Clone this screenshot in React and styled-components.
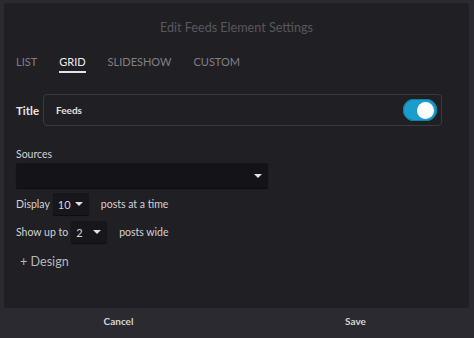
import React, { useState } from 'react'
import styled, { createGlobalStyle } from 'styled-components'

const Global = createGlobalStyle`
  html, body { margin: 0; padding: 0; background: #2b2a30; }
  body { font-family: Lato, "Open Sans", sans-serif; width: 474px; height: 338px; overflow: hidden; }
  * { box-sizing: border-box; }
`

const Frame = styled.div`
  width: 474px;
  height: 338px;
  display: flex;
  flex-direction: column;
  background: #2b2a30;
  padding-top: 3px;
`

const Panel = styled.div`
  flex: 1;
  margin: 0 5px 0 4px;
  background: #201f24;
  border-radius: 3px 3px 0 0;
  padding: 0 12px;
  display: flex;
  flex-direction: column;
`

const Heading = styled.h1`
  margin: 17px 0 0;
  text-align: center;
  font-size: 12.6px;
  font-weight: 400;
  color: #58575e;
`

const Tabs = styled.div`
  display: flex;
  gap: 22px;
  margin-top: 20px;
`

const Tab = styled.div`
  font-size: 11px;
  color: ${p => (p.$active ? '#ececee' : '#807f86')};
  padding-bottom: 3px;
  border-bottom: 2px solid ${p => (p.$active ? '#e4e4e6' : 'transparent')};
`

const TitleRow = styled.div`
  display: flex;
  align-items: center;
  gap: 4px;
  margin-top: 21px;
`

const Label = styled.span`
  font-size: 11.5px;
  font-weight: 700;
  color: #e6e6e8;
`

const TitleBox = styled.div`
  flex: 1;
  height: 32px;
  margin-right: 15px;
  border: 1px solid #3a3940;
  border-radius: 4px;
  display: flex;
  align-items: center;
  justify-content: space-between;
  padding: 0 4px 0 12px;
`

const TitleText = styled.span`
  font-size: 10px;
  font-weight: 700;
  color: #e0e0e2;
`

const Toggle = styled.div`
  width: 34px;
  height: 22px;
  border-radius: 11px;
  background: #1a9ccf;
  box-shadow: inset 0 0 0 1px #12839f;
  display: flex;
  align-items: center;
  justify-content: flex-end;
  padding-right: 3px;
`

const Knob = styled.div`
  width: 17px;
  height: 17px;
  border-radius: 50%;
  background: #ffffff;
`

const FieldLabel = styled.div`
  margin-top: 22px;
  font-size: 10.5px;
  color: #d2d2d4;
`

const Select = styled.div`
  background: ${p => (p.$deep ? '#141317' : '#17161a')};
  width: ${p => p.$w}px;
  height: ${p => p.$h}px;
  border-radius: 2px;
  box-shadow: 0 1px 1px rgba(0, 0, 0, 0.6);
  display: flex;
  align-items: center;
  justify-content: space-between;
  padding: 0 6px 0 ${p => (p.$deep ? 8 : 5)}px;
  color: #d6d6d8;
  font-size: 11px;
`

const Caret = styled.span`
  width: 0;
  height: 0;
  border-left: 4px solid transparent;
  border-right: 4px solid transparent;
  border-top: 4px solid #e2e2e4;
`

const Row = styled.div`
  display: flex;
  align-items: center;
  gap: 3px;
  margin-top: ${p => p.$mt}px;
  font-size: 10.5px;
  color: #d2d2d4;
`

const After = styled.span`
  margin-left: 9px;
`

const AddLink = styled.div`
  margin: 11px 0 0 4px;
  font-size: 12.6px;
  color: #b8b8bb;
`

const Footer = styled.div`
  height: 30px;
  display: flex;
  align-items: center;
  padding-bottom: 4px;
`

const FooterButton = styled.button`
  flex: 1;
  background: none;
  border: 0;
  font-family: inherit;
  font-size: 10px;
  font-weight: 700;
  color: #d4d4d6;
  cursor: pointer;
`

export default function App() {
  const [tab, setTab] = useState('GRID')
  const tabs = ['LIST', 'GRID', 'SLIDESHOW', 'CUSTOM']

  return (
    <Frame>
      <Global />
      <Panel>
        <Heading>Edit Feeds Element Settings</Heading>
        <Tabs>
          {tabs.map(t => (
            <Tab key={t} $active={t === tab} onClick={() => setTab(t)}>{t}</Tab>
          ))}
        </Tabs>
        <TitleRow>
          <Label>Title</Label>
          <TitleBox>
            <TitleText>Feeds</TitleText>
            <Toggle><Knob /></Toggle>
          </TitleBox>
        </TitleRow>
        <FieldLabel>Sources</FieldLabel>
        <Row $mt={3}>
          <Select $deep $w={252} $h={25}><span /><Caret /></Select>
        </Row>
        <Row $mt={5}>
          Display
          <Select $w={36} $h={22}>10<Caret /></Select>
          <After>posts at a time</After>
        </Row>
        <Row $mt={6}>
          Show up to
          <Select $w={36} $h={22}>2<Caret /></Select>
          <After>posts wide</After>
        </Row>
        <AddLink>+ Design</AddLink>
      </Panel>
      <Footer>
        <FooterButton>Cancel</FooterButton>
        <FooterButton>Save</FooterButton>
      </Footer>
    </Frame>
  )
}
